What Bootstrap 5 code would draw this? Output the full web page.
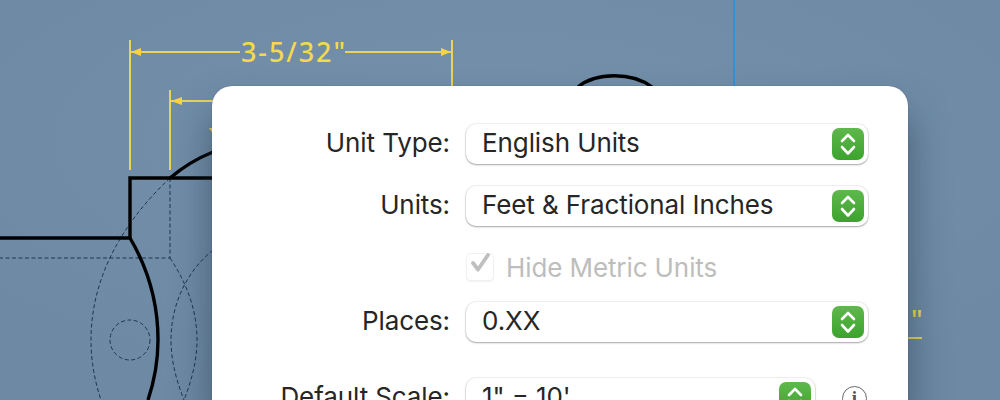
<!DOCTYPE html>
<html lang="en">
<head>
    <meta charset="UTF-8">
    <title>Units</title>
    <link href="https://cdn.jsdelivr.net/npm/bootstrap@5.3.2/dist/css/bootstrap.min.css" rel="stylesheet">
    <style>
        html, body { height: 400px; overflow: hidden; }
        body { background: #6f8ba6; font-family: Inter, "Noto Sans", sans-serif; color: #262626; }
        .drawing { position: absolute; left: 0; top: 0; width: 1000px; height: 400px; }
        .dim-text { font-family: "Noto Sans", sans-serif; font-weight: 500; font-size: 27px; fill: #f4d94e; }
        .sheet { position: absolute; left: 212px; top: 86px; width: 696px; height: 314px; background: #fff; border-radius: 20px 20px 0 0; padding: 38px 40px 0 0; box-shadow: 0 0 1px rgba(30, 45, 65, .6), 0 26px 38px rgba(30, 45, 65, .5); overflow: hidden; }
        .field-row { height: 40px; margin-bottom: 22px; }
        .field-row.check-row { height: 30px; margin-top: 26px; margin-bottom: 20px; }
        .field-row.scale-row { margin-top: 36px; }
        .field-label { width: 238px; margin-right: 16px; padding-bottom: 2px; text-align: right; font-size: 26px; line-height: 38px; letter-spacing: -.1px; white-space: nowrap; }
        .popup { width: 402px; height: 40px; padding: 0 4px 0 16px; background: #fff; border: 0; border-radius: 10px; box-shadow: 0 0 0 1px rgba(0, 0, 0, .05), 0 1px 2px rgba(0, 0, 0, .32); color: #262626; font-size: 26px; letter-spacing: -.1px; }
        .popup.short { width: 349px; }
        .popup-text { margin-top: -3px; }
        .stepper { width: 32px; height: 32px; border-radius: 7px; background: linear-gradient(#5fb84c, #3ca32d); }
        .stepper svg { display: block; }
        .tick { width: 28px; height: 28px; margin: 0 12px 0 0 !important; background-color: #fff; border: 1px solid #e4e4e4; border-radius: 6px; box-shadow: 0 1px 1px rgba(0,0,0,.08); float: none !important; }
        .tick-wrap { padding: 0; min-height: 0; margin: 0; }
        .tick:checked { background-color: #fff; border-color: #e4e4e4; background-image: none; }
        .tick-mark { position: absolute; left: 0; top: 0; pointer-events: none; }
        .tick-text { color: #bdbdbd; font-size: 26px; letter-spacing: -.1px; opacity: 1 !important; }
        .info-mark { width: 25px; height: 25px; margin-left: 27px; border: 1.5px solid #6a6a6a; border-radius: 50%; color: #555; font-family: "Liberation Serif", serif; font-weight: 700; font-size: 19px; line-height: 22px; text-align: center; }
    </style>
</head>
<body>

<svg class="drawing" viewBox="0 0 1000 400" aria-hidden="true">
    <defs>
        <radialGradient id="sheen" cx="50%" cy="35%" r="70%">
            <stop offset="0" stop-color="#7490aa"/>
            <stop offset="1" stop-color="#6d89a3"/>
        </radialGradient>
    </defs>
    <rect width="1000" height="400" fill="url(#sheen)"/>

    <!-- dashed construction lines -->
    <g fill="none" stroke="#1f3550" stroke-width="1" stroke-dasharray="4 2.5">
        <path d="M170 178V258H0"/>
        <circle cx="130" cy="340" r="20"/>
        <path d="M170 178C120 225 91 280 91 340C91 362 95 382 101 400"/>
        <path d="M170 258C188 285 197 312 197 340C197 362 191 382 184 400"/>
        <path d="M213 250C186 272 171 305 171 340C171 362 177 382 184 400"/>
    </g>

    <!-- part outline -->
    <g fill="none" stroke="#000" stroke-width="3.4">
        <path d="M213 178H130V238H0"/>
        <path d="M130 238C150 272 158 305 158 340C158 362 154 382 148 400"/>
        <path d="M170 178C183 167 198 158 213 152"/>
        <path d="M578 87C596 72 632 72 652 87"/>
    </g>

    <!-- dimension lines -->
    <g fill="none" stroke="#e9d35a" stroke-width="2">
        <path d="M130 40V170M452 40V90"/>
        <path d="M130 52H240M345 52H452"/>
        <path d="M170 90V170M170 101H215"/>
        <path d="M905 338H922"/>
    </g>
    <g fill="#f6d63c">
        <path d="M131 52L141 48V56Z"/>
        <path d="M451 52L441 48V56Z"/>
        <path d="M171 101L182 97V105Z"/>
        <path d="M209 128L216 128V138Z"/>
    </g>
    <text class="dim-text" x="241" y="62" textLength="104">3-5/32"</text>
    <text class="dim-text" x="911" y="330">"</text>

    <path d="M734 0V90" stroke="#3a8fd2" stroke-width="2"/>
</svg>

<div class="sheet">
    <div class="d-flex align-items-center field-row">
        <div class="field-label">Unit Type:</div>
        <button type="button" class="popup d-flex align-items-center justify-content-between">
            <span class="popup-text">English Units</span>
            <span class="stepper"><svg width="32" height="32" viewBox="0 0 32 32" fill="none" stroke="#fff" stroke-width="2.6" stroke-linecap="round" stroke-linejoin="round"><path d="M10 13L16 7L22 13M10 19L16 25.5L22 19"/></svg></span>
        </button>
    </div>
    <div class="d-flex align-items-center field-row">
        <div class="field-label">Units:</div>
        <button type="button" class="popup d-flex align-items-center justify-content-between">
            <span class="popup-text">Feet &amp; Fractional Inches</span>
            <span class="stepper"><svg width="32" height="32" viewBox="0 0 32 32" fill="none" stroke="#fff" stroke-width="2.6" stroke-linecap="round" stroke-linejoin="round"><path d="M10 13L16 7L22 13M10 19L16 25.5L22 19"/></svg></span>
        </button>
    </div>
    <div class="d-flex align-items-center field-row check-row">
        <div class="field-label"></div>
        <div class="form-check d-flex align-items-center tick-wrap position-relative">
            <input class="form-check-input tick" type="checkbox" id="hideMetric" checked disabled>
            <svg class="tick-mark" width="28" height="28" viewBox="0 0 28 28" fill="none" stroke="#bfbfbf" stroke-width="3.8" stroke-linecap="round" stroke-linejoin="round"><path d="M7 15L12 21.5L22 7"/></svg>
            <label class="form-check-label tick-text" for="hideMetric">Hide Metric Units</label>
        </div>
    </div>
    <div class="d-flex align-items-center field-row">
        <div class="field-label">Places:</div>
        <button type="button" class="popup d-flex align-items-center justify-content-between">
            <span class="popup-text">0.XX</span>
            <span class="stepper"><svg width="32" height="32" viewBox="0 0 32 32" fill="none" stroke="#fff" stroke-width="2.6" stroke-linecap="round" stroke-linejoin="round"><path d="M10 13L16 7L22 13M10 19L16 25.5L22 19"/></svg></span>
        </button>
    </div>
    <div class="d-flex align-items-center field-row scale-row">
        <div class="field-label">Default Scale:</div>
        <button type="button" class="popup short d-flex align-items-center justify-content-between">
            <span class="popup-text">1" = 10'</span>
            <span class="stepper"><svg width="32" height="32" viewBox="0 0 32 32" fill="none" stroke="#fff" stroke-width="2.6" stroke-linecap="round" stroke-linejoin="round"><path d="M10 13L16 7L22 13M10 19L16 25.5L22 19"/></svg></span>
        </button>
        <div class="info-mark">i</div>
    </div>
</div>

<script src="https://cdn.jsdelivr.net/npm/bootstrap@5.3.2/dist/js/bootstrap.bundle.min.js"></script>
</body>
</html>
